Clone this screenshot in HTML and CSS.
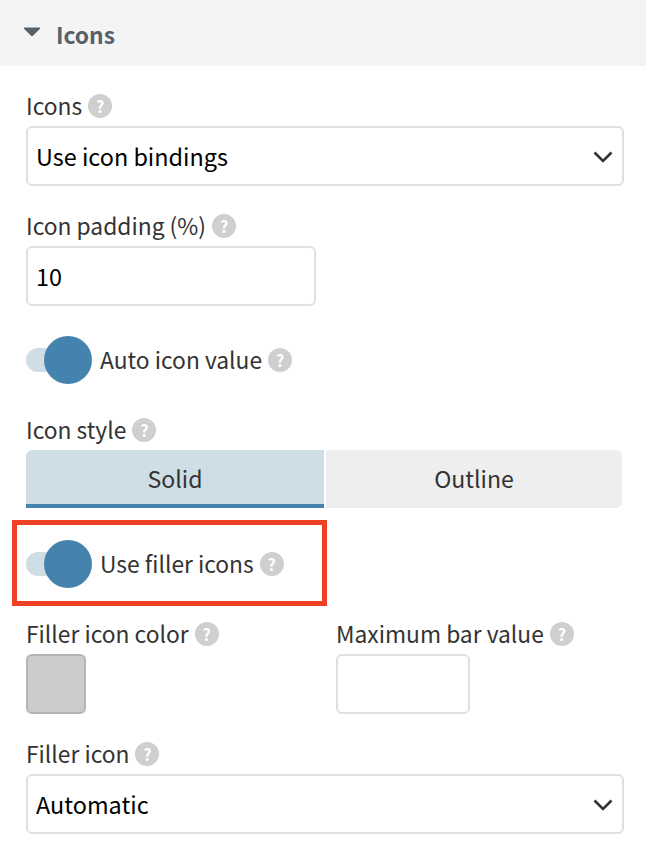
FILE: index.html
```html
<!DOCTYPE html>
<html lang="en">
<head>
<meta charset="utf-8">
<title>Icons</title>
<link rel="stylesheet" href="styles.css">
</head>
<body>
<div class="panel">
  <header class="section-head">
    <svg class="caret" width="18" height="12" viewBox="0 0 18 12"><path d="M1.500 1.500h15a.8.8 0 0 1 .6 1.300L9.600 10a.8.8 0 0 1-1.200 0L.9 2.800a.8.8 0 0 1 .6-1.300z" fill="#56616a"/></svg>
    <span class="head-text">Icons</span>
  </header>
  <div class="form">
    <div class="field f-icons">
      <div class="label"><span>Icons</span><span class="help">?</span></div>
      <div class="control select"><span>Use icon bindings</span><svg class="chev" width="20" height="12" viewBox="0 0 20 12"><path d="M1.500 1.500 10 10l8.500-8.500" fill="none" stroke="#333" stroke-width="2.600"/></svg></div>
    </div>
    <div class="field f-padding">
      <div class="label"><span>Icon padding (%)</span><span class="help">?</span></div>
      <div class="control input-pad"><span>10</span></div>
    </div>
    <div class="toggle-row t-auto">
      <div class="toggle"><div class="knob"></div></div>
      <span class="toggle-text">Auto icon value</span><span class="help">?</span>
    </div>
    <div class="field f-style">
      <div class="label"><span>Icon style</span><span class="help">?</span></div>
      <div class="segments">
        <div class="seg active"><span class="seg-text">Solid</span></div>
        <div class="seg rest"><span class="seg-text">Outline</span></div>
      </div>
    </div>
    <div class="toggle-row t-filler">
      <div class="toggle"><div class="knob"></div></div>
      <span class="toggle-text">Use filler icons</span><span class="help">?</span>
    </div>
    <div class="two-col">
      <div class="field col-a">
        <div class="label"><span>Filler icon color</span><span class="help">?</span></div>
        <div class="swatch"></div>
      </div>
      <div class="field col-b">
        <div class="label"><span>Maximum bar value</span><span class="help">?</span></div>
        <div class="control input-max"></div>
      </div>
    </div>
    <div class="field f-filler">
      <div class="label"><span>Filler icon</span><span class="help">?</span></div>
      <div class="control select"><span>Automatic</span><svg class="chev" width="20" height="12" viewBox="0 0 20 12"><path d="M1.500 1.500 10 10l8.500-8.500" fill="none" stroke="#333" stroke-width="2.600"/></svg></div>
    </div>
  </div>
  <div class="highlight"></div>
</div>
</body>
</html>
```
FILE: styles.css
```css
* { box-sizing: border-box; }
html, body { margin: 0; padding: 0; background: #fff; }
body {
  width: 646px;
  height: 860px;
  overflow: hidden;
  font-family: "Noto Sans CJK SC", "Noto Sans", sans-serif;
  font-size: 22.8px;
  color: #333;
}
.panel { position: relative; width: 646px; height: 860px; }
.section-head {
  height: 66px;
  background: #f4f4f4;
  display: flex;
  align-items: center;
  padding-left: 23px;
  gap: 15px;
  font-weight: 700;
  color: #56616a;
  line-height: 30px;
}
.head-text { padding-top: 4px; }
.caret { margin-top: -3px; }
.form { padding: 0 22px 0 26px; }
.label {
  height: 40px;
  line-height: 30px;
  display: flex;
  align-items: center;
  gap: 6px;
  white-space: nowrap;
}
.help {
  display: inline-flex;
  align-items: center;
  justify-content: center;
  width: 24px;
  height: 24px;
  flex: none;
  border-radius: 50%;
  background: #cfcfcf;
  color: #fff;
  font-size: 16px;
  font-weight: 700;
  line-height: 24px;
}
.control {
  height: 60px;
  border: 2px solid #e0e0e0;
  border-radius: 6px;
  background: #fff;
  color: #000;
  display: flex;
  align-items: center;
  padding: 0 9px 0 8px;
  font-size: 23.4px;
  line-height: 30px;
}
.select { justify-content: space-between; width: 598px; }
.chev { flex: none; margin-top: 1px; }
.f-icons { padding-top: 20px; }
.f-padding { padding-top: 20px; }
.input-pad { width: 290px; }
.toggle-row { display: flex; align-items: center; height: 48px; }
.t-auto { margin-top: 30px; }
.toggle {
  position: relative;
  width: 42px;
  height: 24px;
  border-radius: 12px;
  background: #cfdde5;
  flex: none;
}
.knob {
  position: absolute;
  left: 18px;
  top: -12px;
  width: 48px;
  height: 48px;
  border-radius: 50%;
  background: #4483ae;
}
.toggle-text { margin-left: 32px; margin-right: 6px; line-height: 30px; white-space: nowrap; }
.f-style { padding-top: 26px; }
.segments { display: flex; gap: 2px; }
.seg {
  height: 58px;
  display: flex;
  align-items: center;
  justify-content: center;
  font-size: 23.1px;
  line-height: 30px;
}
.seg-text { margin-top: -2px; }
.seg.active {
  width: 298px;
  background: #cfdde5;
  box-shadow: inset 0 -4px 0 #4483ae;
  border-radius: 6px 0 0 0;
}
.seg.rest {
  width: 296px;
  background: #eeeeee;
  border-radius: 0 6px 6px 0;
}
.t-filler { margin-top: 32px; }
.two-col { display: flex; padding-top: 26px; }
.col-a { width: 310px; }
.swatch {
  width: 60px;
  height: 60px;
  background: #cccccc;
  border: 2px solid #b5b5b5;
  border-radius: 6px;
}
.input-max { width: 134px; }
.f-filler { padding-top: 20px; }
.highlight {
  position: absolute;
  left: 12px;
  top: 520px;
  width: 315px;
  height: 86px;
  border: 5px solid #ef4123;
}
```
